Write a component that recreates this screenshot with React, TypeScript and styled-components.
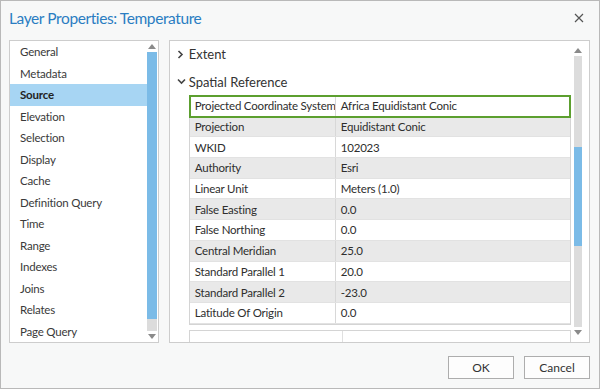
import React from "react";
import styled, { createGlobalStyle } from "styled-components";

const GlobalStyle = createGlobalStyle`
  html, body { margin: 0; padding: 0; }
  body {
    width: 600px;
    height: 389px;
    overflow: hidden;
    font-family: Lato, "Noto Sans", sans-serif;
    color: #333;
  }
  * { box-sizing: border-box; }
`;

const Dialog = styled.div`
  width: 600px;
  height: 389px;
  border: 1px solid #b9b9b9;
  background: #f7f8f8;
  display: flex;
  flex-direction: column;
`;

const TitleBar = styled.div`
  height: 39px;
  display: flex;
  align-items: center;
  justify-content: space-between;
  padding: 0 14px 6px 8px;
`;

const Title = styled.div`
  font-size: 15.5px;
  font-weight: 400;
  color: #2a7dc2;
  letter-spacing: -0.4px;
`;

const CloseButton = styled.div`
  width: 12px;
  height: 12px;
  display: flex;
  align-items: center;
  justify-content: center;
`;

const Body = styled.div`
  display: flex;
  gap: 10px;
  padding: 0 9px 0 8px;
  height: 303px;
`;

const NavList = styled.div`
  width: 150px;
  height: 100%;
  background: #fff;
  border: 1px solid #cdcdcd;
  display: flex;
`;

const NavItems = styled.div`
  flex: 1;
`;

const NavItem = styled.div<{ $active?: boolean }>`
  height: 21.5px;
  line-height: 21.5px;
  padding-left: 10px;
  font-size: 11.5px;
  letter-spacing: -0.2px;
  font-weight: ${({ $active }) => ($active ? 700 : 400)};
  color: ${({ $active }) => ($active ? "#222" : "#3a3a3a")};
  background: ${({ $active }) => ($active ? "#a7d5f3" : "transparent")};
`;

const Scrollbar = styled.div<{ $width: number }>`
  width: ${({ $width }) => $width}px;
  display: flex;
  flex-direction: column;
  align-items: stretch;
`;

const Arrow = styled.div<{ $down?: boolean }>`
  height: 11px;
  display: flex;
  align-items: center;
  justify-content: center;
  &::before {
    content: "";
    border-left: 4px solid transparent;
    border-right: 4px solid transparent;
    ${({ $down }) =>
      $down ? "border-top: 5px solid #8a8a8a;" : "border-bottom: 5px solid #8a8a8a;"}
  }
`;

const Track = styled.div`
  flex: 1;
  background: #dcdcdc;
  display: flex;
  flex-direction: column;
`;

const Thumb = styled.div`
  background: #7bbbe7;
`;

const Panel = styled.div`
  width: 422px;
  height: 100%;
  background: #fff;
  border: 1px solid #cdcdcd;
  display: flex;
  overflow: hidden;
`;

const PanelContent = styled.div`
  flex: 1;
  padding-left: 4px;
  overflow: hidden;
`;

const SectionHeader = styled.div<{ $height: number }>`
  height: ${({ $height }) => $height}px;
  display: flex;
  align-items: center;
  font-size: 13px;
  color: #333;
`;

const Chevron = styled.span`
  width: 15px;
  display: flex;
  align-items: center;
  padding-left: 3px;
`;

const Table = styled.div`
  margin-left: 15px;
  border: 1px solid #d4d4d4;
  border-top: none;
`;

const Row = styled.div<{ $shade?: boolean; $selected?: boolean }>`
  height: 20.7px;
  display: grid;
  grid-template-columns: 146px 1fr;
  background: ${({ $shade }) => ($shade ? "#e9e9e9" : "#fff")};
  border-bottom: 1px solid #e2e2e2;
  font-size: 11.5px;
  letter-spacing: -0.2px;
  color: #2e2e2e;
  ${({ $selected }) =>
    $selected
      ? "outline: 2px solid #5c9f2f; outline-offset: -1px; z-index: 1; position: relative;"
      : ""}
`;

const Cell = styled.div<{ $first?: boolean }>`
  display: flex;
  align-items: center;
  padding-left: 5px;
  white-space: nowrap;
  overflow: hidden;
  border-right: ${({ $first }) => ($first ? "1px solid #d8d8d8" : "none")};
`;

const NextTable = styled.div`
  margin-left: 15px;
  margin-top: 5px;
  height: 14px;
  border: 1px solid #d4d4d4;
  border-bottom: none;
  display: grid;
  grid-template-columns: 153px 1fr;
`;

const NextCell = styled.div`
  border-right: 1px solid #e0e0e0;
`;

const Footer = styled.div`
  flex: 1;
  display: flex;
  justify-content: flex-end;
  align-items: flex-start;
  gap: 10px;
  padding: 13px 9px 0 0;
`;

const Button = styled.button`
  width: 66px;
  height: 23px;
  background: #fdfdfd;
  border: 1px solid #adadad;
  font-family: inherit;
  font-size: 12px;
  color: #333;
  padding: 0;
`;

const navItems = [
  "General",
  "Metadata",
  "Source",
  "Elevation",
  "Selection",
  "Display",
  "Cache",
  "Definition Query",
  "Time",
  "Range",
  "Indexes",
  "Joins",
  "Relates",
  "Page Query",
];

const rows: [string, string][] = [
  ["Projected Coordinate System", "Africa Equidistant Conic"],
  ["Projection", "Equidistant Conic"],
  ["WKID", "102023"],
  ["Authority", "Esri"],
  ["Linear Unit", "Meters (1.0)"],
  ["False Easting", "0.0"],
  ["False Northing", "0.0"],
  ["Central Meridian", "25.0"],
  ["Standard Parallel 1", "20.0"],
  ["Standard Parallel 2", "-23.0"],
  ["Latitude Of Origin", "0.0"],
];

const ChevronRight = () => (
  <svg width="7" height="9" viewBox="0 0 7 9">
    <path d="M1.5 1 L5 4.5 L1.5 8" fill="none" stroke="#444" strokeWidth="1.6" />
  </svg>
);

const ChevronDown = () => (
  <svg width="9" height="7" viewBox="0 0 9 7">
    <path d="M1 1.5 L4.5 5 L8 1.5" fill="none" stroke="#444" strokeWidth="1.6" />
  </svg>
);

const App: React.FC = () => {
  return (
    <>
      <GlobalStyle />
      <Dialog>
        <TitleBar>
          <Title>Layer Properties: Temperature</Title>
          <CloseButton>
            <svg width="10" height="10" viewBox="0 0 10 10">
              <path d="M1 1 L9 9 M9 1 L1 9" stroke="#555" strokeWidth="1.2" />
            </svg>
          </CloseButton>
        </TitleBar>
        <Body>
          <NavList>
            <NavItems>
              {navItems.map((item) => (
                <NavItem key={item} $active={item === "Source"}>
                  {item}
                </NavItem>
              ))}
            </NavItems>
            <Scrollbar $width={10} style={{ marginRight: 1 }}>
              <Arrow />
              <Track>
                <Thumb style={{ height: 267 }} />
              </Track>
              <Arrow $down />
            </Scrollbar>
          </NavList>
          <Panel>
            <PanelContent>
              <SectionHeader $height={26}>
                <Chevron>
                  <ChevronRight />
                </Chevron>
                Extent
              </SectionHeader>
              <SectionHeader $height={29}>
                <Chevron>
                  <ChevronDown />
                </Chevron>
                Spatial Reference
              </SectionHeader>
              <Table>
                {rows.map(([name, value], i) => (
                  <Row key={name} $shade={i % 2 === 1} $selected={i === 0}>
                    <Cell $first>{name}</Cell>
                    <Cell>{value}</Cell>
                  </Row>
                ))}
              </Table>
              <NextTable>
                <NextCell />
                <div />
              </NextTable>
            </PanelContent>
            <Scrollbar $width={8} style={{ margin: "4px 7px 4px 3px" }}>
              <Arrow />
              <Track>
                <div style={{ height: 91, background: "#dcdcdc" }} />
                <Thumb style={{ height: 99 }} />
              </Track>
              <Arrow $down />
            </Scrollbar>
          </Panel>
        </Body>
        <Footer>
          <Button>OK</Button>
          <Button>Cancel</Button>
        </Footer>
      </Dialog>
    </>
  );
};

export default App;
